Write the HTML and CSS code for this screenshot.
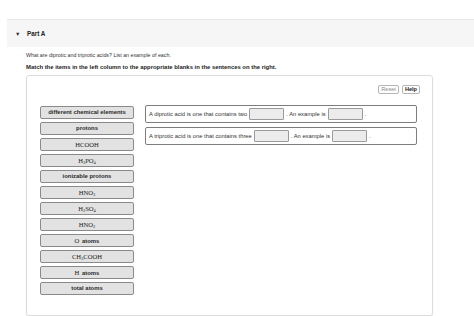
FILE: index.html
```html
<!DOCTYPE html>
<html lang="en">

<head>
    <meta charset="utf-8">
    <meta name="viewport" content="width=device-width, initial-scale=1.0">
    <title>Part A</title>
    <link rel="stylesheet" href="styles.css">
</head>

<body>

    <header class="part">
        <span class="pil">&#9660;</span>
        <h1>Part A</h1>
    </header>

    <section class="opgave">
        <p class="spoergsmaal">What are diprotic and triprotic acids? List an example of each.</p>
        <p class="instruks">Match the items in the left column to the appropriate blanks in the sentences on the right.</p>

        <div class="boks">
            <div class="knapper">
                <button class="reset">Reset</button>
                <button class="help">Help</button>
            </div>

            <div class="kolonner">
                <ul class="brikker">
                    <li>different chemical elements</li>
                    <li>protons</li>
                    <li class="formel">HCOOH</li>
                    <li class="formel">H<sub>3</sub>PO<sub>4</sub></li>
                    <li>ionizable protons</li>
                    <li class="formel">HNO<sub>3</sub></li>
                    <li class="formel">H<sub>2</sub>SO<sub>4</sub></li>
                    <li class="formel">HNO<sub>2</sub></li>
                    <li><span class="serif">O</span> atoms</li>
                    <li class="formel">CH<sub>3</sub>COOH</li>
                    <li><span class="serif">H</span> atoms</li>
                    <li>total atoms</li>
                </ul>

                <div class="saetninger">
                    <div class="saetning">
                        A diprotic acid is one that contains two
                        <span class="felt"></span>
                        . An example is
                        <span class="felt"></span>
                        .
                    </div>
                    <div class="saetning">
                        A triprotic acid is one that contains three
                        <span class="felt"></span>
                        . An example is
                        <span class="felt"></span>
                        .
                    </div>
                </div>
            </div>
        </div>
    </section>

</body></html>
```

FILE: styles.css
```css
body {
    margin: 0;
    font-family: "Liberation Sans", Arial, sans-serif;
    color: #333;
    background-color: #fff;
}

.part {
    display: flex;
    align-items: center;
    margin: 19px 0 0 7px;
    height: 27px;
    border-top: 1px solid #e6e6e6;
    background-color: #f6f6f6;
}

.pil {
    font-size: 5.5px;
    color: #333;
    margin-left: 8px;
    width: 12px;
}

h1 {
    margin: 0;
    font-size: 6.3px;
    font-weight: bold;
    color: #222;
}

.opgave {
    padding-left: 26px;
}

.spoergsmaal {
    margin: 4px 0 0;
    font-size: 5.3px;
    line-height: 8px;
    color: #333;
}

.instruks {
    margin: 4px 0 0;
    font-size: 5.9px;
    line-height: 8px;
    font-weight: bold;
    color: #222;
}

.boks {
    box-sizing: border-box;
    width: 407px;
    height: 241px;
    margin-top: 4px;
    border: 1px solid #dcdcdc;
    border-radius: 3px;
    box-shadow: 0 1px 1px #e4e4e4;
    padding: 9px 12px 0 13px;
}

.knapper {
    display: flex;
    justify-content: flex-end;
    gap: 3px;
}

button {
    font-family: "Liberation Sans", Arial, sans-serif;
    font-size: 5.6px;
    height: 9px;
    padding: 0 2px;
    line-height: 7px;
    background-color: #fff;
    border: 1px solid #b5b5b5;
    border-radius: 2px;
}

.reset {
    color: #888;
}

.help {
    color: #222;
    font-weight: bold;
}

.kolonner {
    display: flex;
    gap: 11px;
    margin-top: 12px;
}

.brikker {
    list-style: none;
    margin: 0;
    padding: 0;
    width: 94px;
    display: flex;
    flex-direction: column;
    gap: 3px;
}

.brikker li {
    box-sizing: border-box;
    height: 13px;
    line-height: 11px;
    text-align: center;
    background-color: #e2e2e2;
    border: 1px solid #8a8a8a;
    border-radius: 2px;
    font-size: 5.9px;
    font-weight: bold;
    color: #2a2a2a;
}

.brikker li.formel,
.serif {
    font-family: "Liberation Serif", "Times New Roman", serif;
    font-weight: normal;
    font-size: 6.6px;
    color: #222;
}

.serif {
    margin-right: 1px;
}

sub {
    font-size: 4.5px;
    vertical-align: -1px;
    line-height: 0;
}

.saetninger {
    width: 272px;
    display: flex;
    flex-direction: column;
    gap: 4px;
    margin-top: -1px;
}

.saetning {
    box-sizing: border-box;
    height: 18px;
    display: flex;
    align-items: center;
    gap: 2px;
    padding-left: 3px;
    border: 1px solid #7d7d7d;
    border-radius: 2px;
    font-size: 5.8px;
    color: #333;
}

.felt {
    box-sizing: border-box;
    width: 35px;
    height: 12px;
    border: 1px solid #9a9a9a;
    border-radius: 1px;
    background-color: #ececec;
}
```
